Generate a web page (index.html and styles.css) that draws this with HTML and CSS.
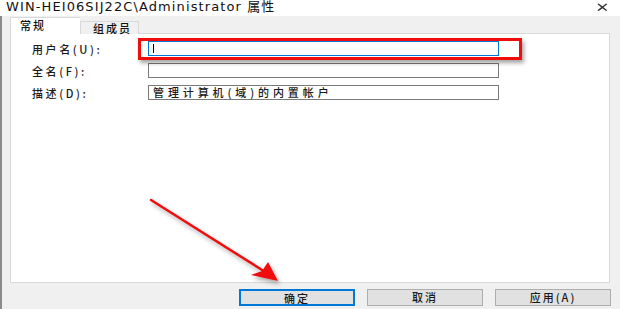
FILE: index.html
```html
<!DOCTYPE html>
<html lang="zh-CN">
<head>
<meta charset="utf-8">
<title>Administrator 属性</title>
<link rel="stylesheet" href="styles.css">
</head>
<body>
<div class="window">
  <div class="titlebar">
    <span class="title">WIN-HEI06SIJ22C\Administrator 属性</span>
    <span class="close">✕</span>
  </div>
  <div class="dialog">
    <div class="tabs">
      <div class="tab active">常规</div>
      <div class="tab">组成员</div>
    </div>
    <div class="panel">
      <div class="form">
        <label class="lbl">用户名(U):</label>
        <div class="field focus"><span class="caret"></span></div>
        <label class="lbl">全名(F):</label>
        <div class="field"></div>
        <label class="lbl">描述(D):</label>
        <div class="field">管理计算机(域)的内置帐户</div>
      </div>
    </div>
    <div class="buttons">
      <button class="btn default">确定</button>
      <button class="btn">取消</button>
      <button class="btn">应用(A)</button>
    </div>
  </div>
  <div class="highlight"></div>
  <svg class="arrow" width="620" height="309" viewBox="0 0 620 309">
    <defs>
      <filter id="sh" x="-20%" y="-20%" width="140%" height="140%">
        <feDropShadow dx="2" dy="3" stdDeviation="2" flood-color="#000" flood-opacity="0.35"/>
      </filter>
    </defs>
    <g filter="url(#sh)">
      <line x1="151" y1="200" x2="270" y2="275" stroke="#f01010" stroke-width="2.5" stroke-linecap="round"/>
      <polygon points="278,281 251,275 262,271 268,262" fill="#f01010"/>
    </g>
  </svg>
</div>
</body>
</html>
```
FILE: styles.css
```css
html, body {
  margin: 0;
  padding: 0;
}
body {
  width: 620px;
  height: 309px;
  overflow: hidden;
  background: #f0f0f0;
  font-family: "Noto Sans CJK SC", "DejaVu Sans", sans-serif;
  font-size: 12px;
  color: #111;
}
.window {
  position: relative;
  width: 620px;
  height: 309px;
}
.titlebar {
  height: 16px;
  background: #ffffff;
  display: flex;
  align-items: center;
  justify-content: space-between;
  padding: 0 12px 0 6px;
}
.title {
  font-family: "DejaVu Sans", "Noto Sans CJK SC", sans-serif;
  font-size: 13px;
  letter-spacing: 1.1px;
  color: #111;
  line-height: 16px;
  transform: translateY(-1px);
}
.close {
  font-family: "DejaVu Sans", sans-serif;
  font-size: 13px;
  color: #333;
  line-height: 16px;
  transform: scaleX(1.3);
}
.dialog {
  border-left: 2px solid #8a8a8a;
  height: 293px;
  box-sizing: border-box;
  padding: 1px 10px 0 8px;
}
.tabs {
  display: flex;
  align-items: flex-end;
  height: 17px;
  position: relative;
  z-index: 1;
  margin-bottom: -1px;
}
.tab {
  box-sizing: border-box;
  border: 1px solid #d9d9d9;
  border-bottom: none;
  background: #f0f0f0;
  height: 13px;
  width: 59px;
  font-size: 11px;
  font-weight: 500;
  line-height: 12px;
  letter-spacing: 2px;
  padding-left: 12px;
}
.tab.active {
  background: #ffffff;
  height: 17px;
  width: 70px;
  line-height: 15px;
  padding-left: 9px;
  border-right: none;
}
.panel {
  background: #ffffff;
  border: 1px solid #d9d9d9;
  height: 250px;
  box-sizing: border-box;
  padding: 7px 0 0 21px;
}
.form {
  display: grid;
  grid-template-columns: 116px 351px;
  grid-auto-rows: 15px;
  row-gap: 7px;
  align-items: center;
}
.lbl {
  font-size: 11px;
  font-weight: 500;
  letter-spacing: 2.6px;
  line-height: 15px;
  color: #1a1a1a;
  padding-top: 1px;
}
.field {
  box-sizing: border-box;
  height: 15px;
  border: 1px solid #7a7a7a;
  background: #fff;
  font-size: 11px;
  font-weight: 500;
  line-height: 13px;
  letter-spacing: 3.9px;
  padding-left: 4px;
  color: #1a1a1a;
  white-space: nowrap;
  display: flex;
  align-items: center;
}
.field.focus {
  border-color: #0078d7;
}
.caret {
  width: 1px;
  height: 9px;
  background: #000;
}
.buttons {
  display: flex;
  justify-content: flex-end;
  gap: 12px;
  margin-top: 6px;
  margin-right: -1px;
}
.btn {
  box-sizing: border-box;
  width: 116px;
  height: 17px;
  margin: 0;
  padding: 0;
  background: #e1e1e1;
  border: 1px solid #adadad;
  font-family: "Noto Sans CJK SC", "DejaVu Sans", sans-serif;
  font-size: 11px;
  font-weight: 500;
  letter-spacing: 2px;
  line-height: 15px;
  color: #1a1a1a;
}
.btn.default {
  border: 2px solid #0078d7;
}
.highlight {
  position: absolute;
  left: 138px;
  top: 38px;
  width: 384px;
  height: 22px;
  box-sizing: border-box;
  border: 3px solid #f20d0d;
  box-shadow: 2px 3px 4px rgba(0, 0, 0, 0.35);
}
.arrow {
  position: absolute;
  left: 0;
  top: 0;
  pointer-events: none;
}
```
